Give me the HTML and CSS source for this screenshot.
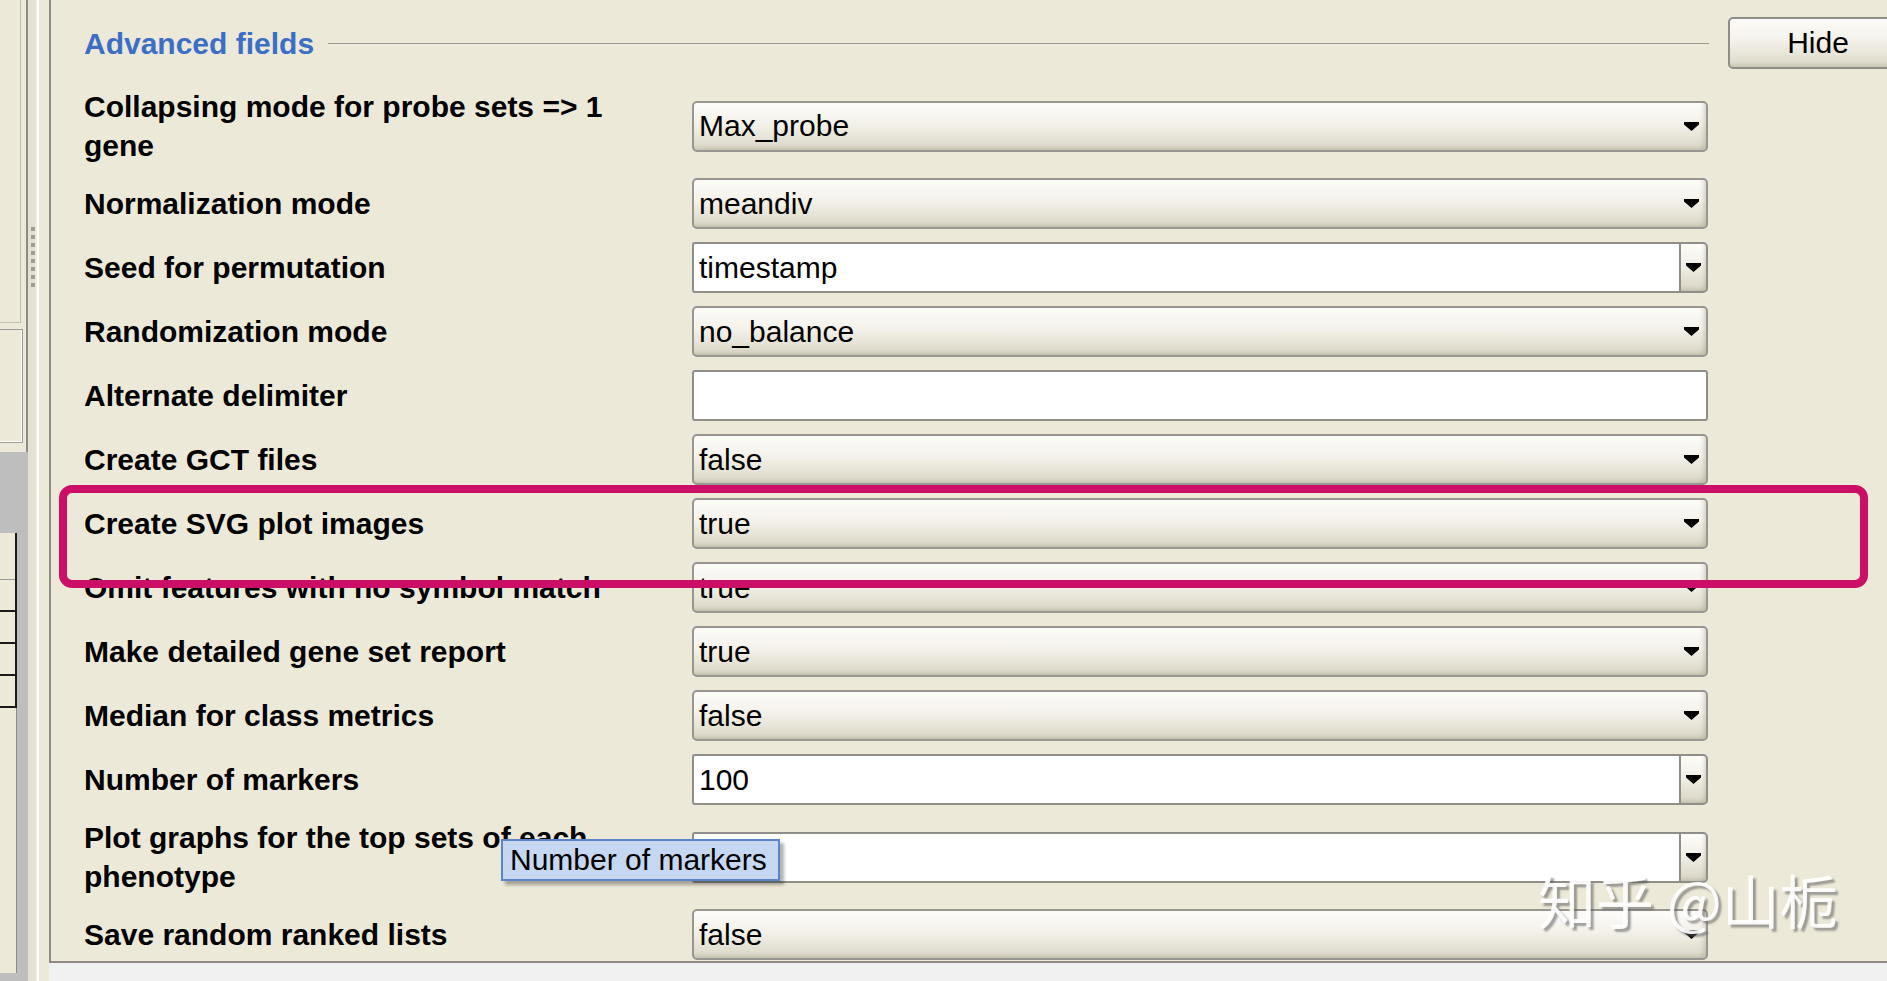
FILE: index.html
```html
<!DOCTYPE html>
<html lang="en">
<head>
<meta charset="utf-8">
<title>Advanced fields</title>
<link rel="stylesheet" href="styles.css">
</head>
<body>
<div class="side">
  <div class="side-panel">
    <div class="side-top">
      <div class="box1"></div>
      <div class="box2"></div>
    </div>
    <div class="side-bottom">
      <div class="stable">
        <div class="thead"></div>
        <div class="trow"></div>
        <div class="trow"></div>
        <div class="trow"></div>
        <div class="trow"></div>
      </div>
      <div class="sblank"></div>
    </div>
  </div>
  <div class="divider">
    <div class="grip"><i></i><i></i><i></i><i></i><i></i><i></i><i></i><i></i></div>
    <div class="hl"></div>
  </div>
</div>

<div class="main">
  <div class="panel">
    <div class="header">
      <span class="legend">Advanced fields</span>
      <span class="rule"></span>
      <button class="hide">Hide</button>
    </div>

    <div class="grid">
      <div class="label">Collapsing mode for probe sets =&gt; 1 gene</div>
      <div class="combo"><span class="val">Max_probe</span><svg class="arrow" viewBox="0 0 15 9"><path d="M0 0H15V2.5L7.5 9L0 2.5Z"/></svg></div>

      <div class="label">Normalization mode</div>
      <div class="combo"><span class="val">meandiv</span><svg class="arrow" viewBox="0 0 15 9"><path d="M0 0H15V2.5L7.5 9L0 2.5Z"/></svg></div>

      <div class="label">Seed for permutation</div>
      <div class="editable"><span class="field">timestamp</span><span class="btn"><svg class="arrow" viewBox="0 0 15 9"><path d="M0 0H15V2.5L7.5 9L0 2.5Z"/></svg></span></div>

      <div class="label">Randomization mode</div>
      <div class="combo"><span class="val">no_balance</span><svg class="arrow" viewBox="0 0 15 9"><path d="M0 0H15V2.5L7.5 9L0 2.5Z"/></svg></div>

      <div class="label">Alternate delimiter</div>
      <div class="textfield"></div>

      <div class="label">Create GCT files</div>
      <div class="combo"><span class="val">false</span><svg class="arrow" viewBox="0 0 15 9"><path d="M0 0H15V2.5L7.5 9L0 2.5Z"/></svg></div>

      <div class="label">Create SVG plot images</div>
      <div class="combo"><span class="val">true</span><svg class="arrow" viewBox="0 0 15 9"><path d="M0 0H15V2.5L7.5 9L0 2.5Z"/></svg></div>

      <div class="label">Omit features with no symbol match</div>
      <div class="combo"><span class="val">true</span><svg class="arrow" viewBox="0 0 15 9"><path d="M0 0H15V2.5L7.5 9L0 2.5Z"/></svg></div>

      <div class="label">Make detailed gene set report</div>
      <div class="combo"><span class="val">true</span><svg class="arrow" viewBox="0 0 15 9"><path d="M0 0H15V2.5L7.5 9L0 2.5Z"/></svg></div>

      <div class="label">Median for class metrics</div>
      <div class="combo"><span class="val">false</span><svg class="arrow" viewBox="0 0 15 9"><path d="M0 0H15V2.5L7.5 9L0 2.5Z"/></svg></div>

      <div class="label">Number of markers</div>
      <div class="editable"><span class="field">100</span><span class="btn"><svg class="arrow" viewBox="0 0 15 9"><path d="M0 0H15V2.5L7.5 9L0 2.5Z"/></svg></span></div>

      <div class="label">Plot graphs for the top sets of each phenotype</div>
      <div class="editable"><span class="field"></span><span class="btn"><svg class="arrow" viewBox="0 0 15 9"><path d="M0 0H15V2.5L7.5 9L0 2.5Z"/></svg></span></div>

      <div class="label">Save random ranked lists</div>
      <div class="combo"><span class="val">false</span><svg class="arrow" viewBox="0 0 15 9"><path d="M0 0H15V2.5L7.5 9L0 2.5Z"/></svg></div>
    </div>

    <div class="highlight"></div>
    <div class="tooltip">Number of markers</div>
    <div class="watermark">知乎 @山栀</div>
  </div>
  <div class="below"></div>
</div>
</body>
</html>
```

FILE: styles.css
```css
html, body {
  margin: 0;
  padding: 0;
}

body {
  width: 1887px;
  height: 981px;
  overflow: hidden;
  display: flex;
  background: #ece9d8;
  font-family: "Liberation Sans", Arial, sans-serif;
  color: #000;
}

/* ---------- left strip ---------- */
.side {
  width: 49px;
  flex: none;
  display: flex;
}

.side-panel {
  width: 28px;
  display: flex;
  flex-direction: column;
}

.side-top {
  height: 452px;
  box-sizing: border-box;
  border-right: 2px solid #8c8b86;
}

.box1 {
  width: 21px;
  height: 323px;
  box-sizing: border-box;
  border-right: 1px solid #c4c0b0;
  border-bottom: 1px solid #c4c0b0;
}

.box2 {
  width: 23px;
  height: 114px;
  margin-top: 6px;
  box-sizing: border-box;
  border: 1px solid #9e9c94;
  border-left: none;
  box-shadow: inset -1px -1px 0 #fff;
}

.side-bottom {
  flex: 1;
  background: #bebebe;
  padding-top: 81px;
}

.stable {
  width: 17px;
  box-sizing: border-box;
  background: #ece9d8;
  border-right: 2px solid #1a1a1a;
}

.thead {
  height: 47px;
  box-sizing: border-box;
  border-bottom: 1px solid #9a9a9a;
}

.trow {
  height: 32px;
  box-sizing: border-box;
  border-bottom: 2px solid #1a1a1a;
}

.sblank {
  width: 17px;
  height: 265px;
  box-sizing: border-box;
  background: #ece9d8;
  border-right: 1px solid #8c8b86;
}

.divider {
  width: 21px;
  display: flex;
  padding-left: 3px;
  box-sizing: border-box;
  background: linear-gradient(to right, #e4e1d2 0, #e4e1d2 7px, #ece9d8 7px);
}

.grip {
  display: flex;
  flex-direction: column;
  gap: 4px;
  margin-top: 227px;
  width: 4px;
}

.grip i {
  display: block;
  width: 4px;
  height: 4px;
  background: #9d9c96;
}

.hl {
  width: 2px;
  margin-left: 2px;
  background: #ffffff;
  align-self: stretch;
}

/* ---------- main panel ---------- */
.main {
  flex: 1;
  display: flex;
  flex-direction: column;
  min-width: 0;
}

.panel {
  position: relative;
  height: 963px;
  box-sizing: border-box;
  border-left: 2px solid #8c8b86;
  border-bottom: 2px solid #8c8b86;
  padding: 17px 0 0 33px;
  background: #ece9d8;
}

.below {
  flex: 1;
  background: #f0f0f0;
}

.header {
  display: flex;
  align-items: center;
  width: 1824px;
  height: 52px;
}

.legend {
  color: #3b6fc6;
  font-weight: bold;
  font-size: 30px;
  line-height: 39px;
}

.rule {
  flex: 1;
  height: 0;
  border-top: 1px solid #9c9a92;
  margin: 0 19px 0 14px;
}

.hide {
  width: 180px;
  height: 52px;
  box-sizing: border-box;
  border: 2px solid #8e8d88;
  border-radius: 5px;
  background: linear-gradient(#fdfcf9, #f3f1e9 45%, #dcd8c8);
  box-shadow: inset -3px -3px 4px -1px rgba(110, 100, 80, 0.2);
  font-family: "Liberation Sans", Arial, sans-serif;
  font-size: 30px;
  color: #000;
  padding: 0;
}

.grid {
  display: grid;
  grid-template-columns: 608px 1016px;
  row-gap: 13px;
  align-items: center;
  margin-top: 18px;
}

.label {
  width: 560px;
  font-weight: bold;
  font-size: 30px;
  line-height: 39px;
}

.combo {
  height: 51px;
  box-sizing: border-box;
  display: flex;
  align-items: center;
  padding: 0 7px 0 5px;
  border: 2px solid #979690;
  border-radius: 5px;
  background: linear-gradient(#fdfcf9, #f3f1e9 45%, #dad6c6);
  box-shadow: inset -4px -3px 5px -2px rgba(100, 95, 80, 0.25);
  font-size: 30px;
}

.val {
  flex: 1;
}

.arrow {
  width: 15px;
  height: 9px;
  fill: #000;
  flex: none;
}

.editable {
  height: 51px;
  display: flex;
}

.field {
  flex: 1;
  display: flex;
  align-items: center;
  padding-left: 5px;
  box-sizing: border-box;
  background: #fff;
  border: 2px solid #8f8e88;
  border-right: none;
  border-radius: 3px 0 0 3px;
  font-size: 30px;
}

.btn {
  width: 29px;
  flex: none;
  display: flex;
  align-items: center;
  justify-content: center;
  box-sizing: border-box;
  border: 2px solid #8f8e88;
  border-radius: 0 5px 5px 0;
  background: linear-gradient(#fdfcf9, #f1efe6 45%, #d8d4c4);
  box-shadow: inset -3px -3px 4px -2px rgba(100, 95, 80, 0.25);
}

.textfield {
  height: 51px;
  box-sizing: border-box;
  background: #fff;
  border: 2px solid #8f8e88;
  border-radius: 3px;
}

/* ---------- overlays ---------- */
.highlight {
  position: absolute;
  left: 8px;
  top: 485px;
  width: 1809px;
  height: 103px;
  box-sizing: border-box;
  border: 8px solid #cc0f66;
  border-radius: 13px;
}

.tooltip {
  position: absolute;
  left: 450px;
  top: 839px;
  width: 279px;
  height: 42px;
  box-sizing: border-box;
  padding: 0 7px;
  background: #c6d7f1;
  border: 2px solid #5c84c9;
  font-size: 30px;
  line-height: 38px;
  white-space: nowrap;
  box-shadow: 4px 4px 3px rgba(0, 0, 0, 0.3);
}

.watermark {
  position: absolute;
  left: 1487px;
  top: 870px;
  font-family: "Noto Sans CJK SC", sans-serif;
  font-size: 58px;
  line-height: 1;
  white-space: nowrap;
  color: rgba(255, 255, 255, 0.92);
  text-shadow: 3px 3px 2px rgba(90, 90, 90, 0.55);
}
```
